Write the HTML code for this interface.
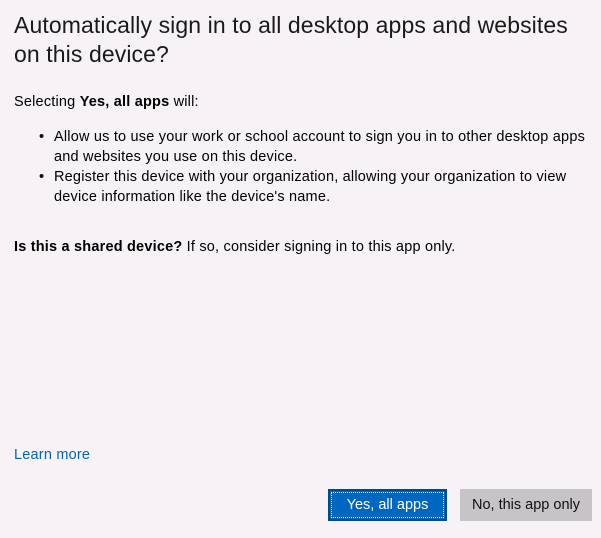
<!DOCTYPE html>
<html><head><style>
html,body{margin:0;padding:0;width:601px;height:538px;background:#f6f2f5;overflow:hidden;font-family:"Liberation Sans",sans-serif;color:#000}
.t{position:absolute;white-space:nowrap}
.h{font-size:23px;color:#1a1a1a;left:14px;letter-spacing:0.1px}
.b{font-size:14.5px;letter-spacing:0.2px}
.btn{position:absolute;top:489px;height:32px;font-size:14.5px;text-align:center;line-height:32px;box-sizing:border-box}
</style></head><body>
<div class="t h" style="top:12px">Automatically sign in to all desktop apps and websites</div>
<div class="t h" style="top:41px">on this device?</div>
<div class="t b" style="top:94px;left:14px">Selecting <b>Yes, all apps</b> will:</div>
<div class="t b" style="top:129px;left:39px">•</div>
<div class="t b" style="top:129px;left:54px">Allow us to use your work or school account to sign you in to other desktop apps</div>
<div class="t b" style="top:149px;left:54px">and websites you use on this device.</div>
<div class="t b" style="top:169px;left:39px">•</div>
<div class="t b" style="top:169px;left:54px">Register this device with your organization, allowing your organization to view</div>
<div class="t b" style="top:189px;left:54px">device information like the device's name.</div>
<div class="t b" style="top:239px;left:14px"><b>Is this a shared device?</b> If so, consider signing in to this app only.</div>
<div class="t b" style="top:447px;left:14px;color:#0067b8">Learn more</div>
<div class="btn" style="left:328px;width:119px;background:#0067c0;color:#fff;border:2px solid #00498a;outline:1px dotted #fff;outline-offset:-4px;line-height:28px">Yes, all apps</div>
<div class="btn" style="left:460px;width:132px;background:#c6c4c6;color:#111">No, this app only</div>
</body></html>
